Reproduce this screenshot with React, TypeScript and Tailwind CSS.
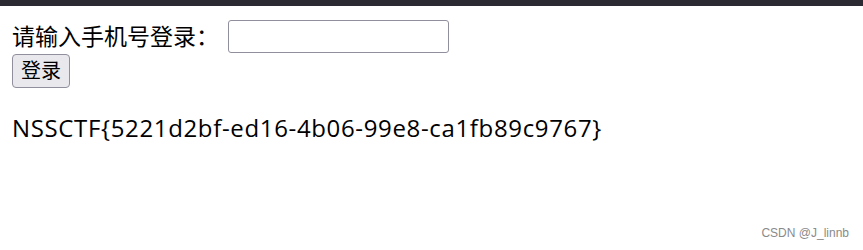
import React from 'react';

const App = () => {
  return (
    <div className="relative h-[250px] w-[863px] overflow-hidden bg-white" style={{ fontFamily: '"Open Sans", "Noto Sans CJK SC", sans-serif' }}>
      <div className="h-[6px] bg-[#2b2a33]" />
      <div className="px-[12px] pt-[14px]">
        <div className="flex items-center text-[23px] leading-[33px] text-black">
          <span>请输入手机号登录：</span>
          <input
            type="text"
            className="ml-[9px] h-[33px] w-[221px] rounded-[3px] border border-[#8f8f9d] bg-white"
          />
        </div>
        <button className="mt-[1px] h-[34px] rounded-[4px] border border-[#8f8f9d] bg-[#e9e9ed] px-[8px] text-[20px] leading-none text-black">
          登录
        </button>
        <p className="mt-[25px] text-[24px] leading-[30px] tracking-[0.65px] text-black">
          NSSCTF{'{'}5221d2bf-ed16-4b06-99e8-ca1fb89c9767{'}'}
        </p>
      </div>
      <div className="absolute bottom-[8px] right-[14px] text-[12px] text-[#8a8a8a]" style={{ fontFamily: '"Liberation Sans", Arial, sans-serif' }}>
        CSDN @J_linnb
      </div>
    </div>
  );
};

export default App;
